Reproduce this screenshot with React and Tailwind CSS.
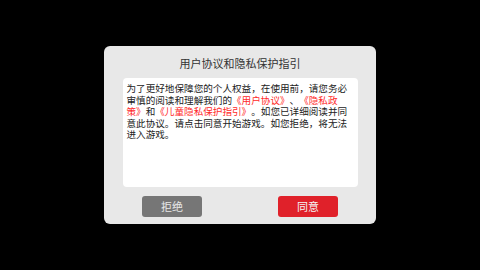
const FONT = { fontFamily: '"Noto Sans CJK SC", "Noto Sans", sans-serif' };

export default function App() {
  return (
    <div className="w-[480px] h-[270px] bg-black flex items-center justify-center [text-spacing-trim:space-all]" style={FONT}>
      <div className="w-[272px] h-[178px] bg-[#e8e8e8] rounded-[6px] flex flex-col items-center">
        <div className="h-[32px] pt-[9px] text-[11px] leading-[16px] text-[#333]">用户协议和隐私保护指引</div>
        <div className="w-[235px] h-[109px] bg-white rounded-[4px] px-[4px] pt-[5px] text-[9.6px] leading-[11.5px] text-[#222]">
          为了更好地保障您的个人权益，在使用前，请您务必审慎的阅读和理解我们的<span className="text-[#ff2a2a]">《用户协议》</span>、<span className="text-[#ff2a2a]">《隐私政策》</span>和<span className="text-[#ff2a2a]">《儿童隐私保护指引》</span>。如您已详细阅读并同意此协议。请点击同意开始游戏。如您拒绝，将无法进入游戏。
        </div>
        <div className="flex gap-[76px] mt-[9px]">
          <button className="w-[60px] h-[21px] rounded-[3px] bg-[#767676] text-[#e8e8e8] text-[11px]">拒绝</button>
          <button className="w-[60px] h-[21px] rounded-[3px] bg-[#e0212a] text-[#f4f4f4] text-[11px]">同意</button>
        </div>
      </div>
    </div>
  );
}
